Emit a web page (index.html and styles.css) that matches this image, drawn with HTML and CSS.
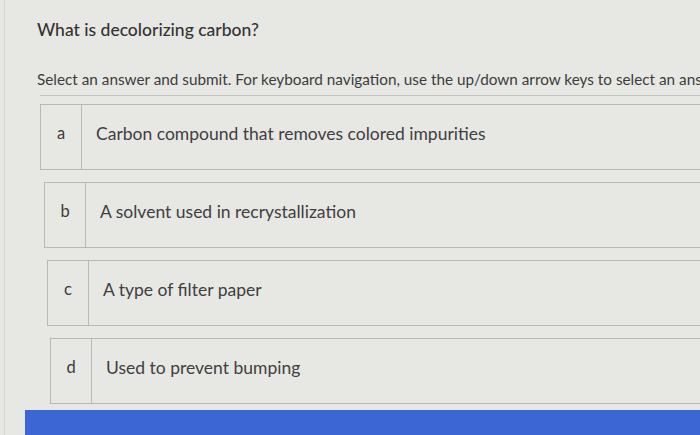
FILE: index.html
```html
<!DOCTYPE html>
<html lang="en">
<head>
  <meta charset="UTF-8">
  <title>Question</title>
  <link rel="stylesheet" href="styles.css">
</head>
<body>

<div class="screen">
  <h1 class="question">What is decolorizing carbon?</h1>
  <p class="hint">Select an answer and submit. For keyboard navigation, use the up/down arrow keys to select an answer.</p>

  <!-- answer choices -->
  <ul class="choices">
    <li class="choice"><span class="letter">a</span><span class="answer">Carbon compound that removes colored impurities</span></li>
    <li class="choice"><span class="letter">b</span><span class="answer">A solvent used in recrystallization</span></li>
    <li class="choice"><span class="letter">c</span><span class="answer">A type of filter paper</span></li>
    <li class="choice"><span class="letter">d</span><span class="answer">Used to prevent bumping</span></li>
  </ul>

  <div class="submit-bar"></div>
</div>

</body>
</html>
```

FILE: styles.css
```css
html, body { margin: 0; padding: 0; }
body { background: #e7e7e3; font-family: Lato, "Open Sans", sans-serif; color: #3b3b3b; width: 700px; height: 435px; overflow: hidden; }
.screen { padding: 19px 0 0 32px; border-left: 1px solid #d4d4d0; margin-left: 4px; }
.question { font-size: 17.5px; font-weight: 500; margin: 0 0 30px; color: #333; }
.hint { font-size: 15.3px; margin: 0; white-space: nowrap; overflow: hidden; color: #3d3d3d; }
.choices { list-style: none; margin: 7px 0 0 3px; padding: 8px 0 0; border-top: 1px solid #c4c4c0; }
.choice { display: flex; height: 64px; border: 1px solid #b9b9b4; border-right: none; margin-bottom: 12px; }
.choice:nth-child(2) { margin-left: 4px; }
.choice:nth-child(3) { margin-left: 7px; }
.choice:nth-child(4) { margin-left: 10px; margin-bottom: 6px; }
.letter { width: 41px; flex: none; border-right: 1px solid #b9b9b4; display: flex; align-items: center; justify-content: center; font-size: 16.5px; padding-bottom: 8px; box-sizing: border-box; }
.answer { display: flex; align-items: center; padding: 0 0 8px 14px; font-size: 17.5px; color: #404040; }
.submit-bar { height: 30px; background: #3c66d4; margin-left: -12px; }
```
